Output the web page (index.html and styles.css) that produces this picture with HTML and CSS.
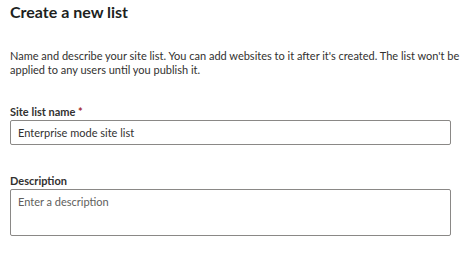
FILE: index.html
```html
<!DOCTYPE html>
<html>
<head>
<meta charset="utf-8">
<link rel="stylesheet" href="styles.css">
</head>
<body>
<div class="panel">
  <h1 class="title">Create a new list</h1>
  <p class="intro">Name and describe your site list. You can add websites to it after it's created. The list won't be applied to any users until you publish it.</p>
  <div class="field field-name">
    <label class="label">Site list name <span class="req">*</span></label>
    <div class="input">Enterprise mode site list</div>
  </div>
  <div class="field field-desc">
    <label class="label">Description</label>
    <div class="textarea">Enter a description</div>
  </div>
</div>
</body>
</html>
```

FILE: styles.css
```css
html, body {
  margin: 0;
  padding: 0;
  background: #ffffff;
}
body {
  font-family: Lato, "Open Sans", sans-serif;
  color: #323130;
}
.panel {
  width: 441px;
  padding: 0 0 0 10px;
  display: flex;
  flex-direction: column;
}
.title {
  margin: 0;
  padding-top: 1px;
  font-size: 16px;
  line-height: 22px;
  font-weight: 700;
  color: #201f1e;
}
.intro {
  width: 460px;
  margin: 26px 0 0 0;
  font-size: 11px;
  line-height: 14px;
  color: #323130;
}
.field {
  display: flex;
  flex-direction: column;
}
.field-name {
  margin-top: 28px;
}
.field-desc {
  margin-top: 29px;
}
.label {
  font-size: 11px;
  line-height: 14px;
  font-weight: 700;
  color: #323130;
  margin-bottom: 1px;
}
.req {
  color: #a4262c;
}
.input, .textarea {
  box-sizing: border-box;
  border: 1px solid #8a8886;
  border-radius: 2px;
  font-size: 11px;
  padding: 0 7px;
}
.input {
  height: 25px;
  line-height: 23px;
  color: #323130;
}
.textarea {
  height: 47px;
  line-height: 14px;
  padding-top: 5px;
  color: #605e5c;
}
```
